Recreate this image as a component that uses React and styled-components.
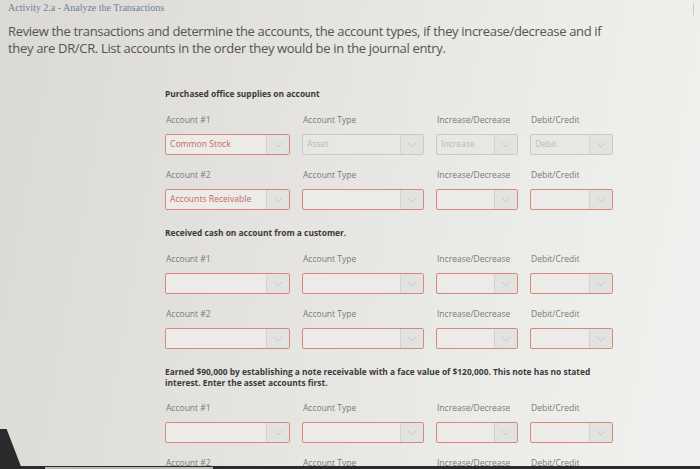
import React from "react";
import styled, { createGlobalStyle } from "styled-components";

const Global = createGlobalStyle`
  html, body { margin: 0; padding: 0; }
  body { font-family: "Open Sans", "Liberation Sans", sans-serif; }
`;

const Screen = styled.div`
  position: relative;
  width: 700px;
  height: 469px;
  overflow: hidden;
  background: linear-gradient(100deg, #dad9d4 0%, #e3e2de 35%, #ebebe8 70%, #f1f1ef 100%);
`;

const Header = styled.header`
  padding: 1px 8px 0 8px;
`;

const Crumb = styled.div`
  font-family: "Liberation Serif", "DejaVu Serif", serif;
  font-size: 10px;
  line-height: 13px;
  color: #70819a;
`;

const Instructions = styled.p`
  margin: 9px 0 0 0;
  font-size: 13px;
  letter-spacing: -0.33px;
  line-height: 17px;
  color: #545454;
  width: 615px;
`;

const Content = styled.main`
  padding: 31px 0 0 165px;
  display: flex;
  flex-direction: column;
  gap: 17px;
`;

const Section = styled.section`
  display: flex;
  flex-direction: column;
`;

const SectionTitle = styled.div`
  font-size: 8.4px;
  line-height: ${(p) => (p.$wide ? "11px" : "12px")};
  font-weight: 700;
  color: #3a3a3a;
  margin-bottom: 14px;
  width: ${(p) => (p.$wide ? "440px" : "auto")};
`;

const Entry = styled.div`
  display: grid;
  grid-template-columns: 125px 122px 82px 83px;
  column-gap: 12px;
  grid-template-rows: 11px 21px;
  row-gap: 9px;
  & + & { margin-top: 14px; }
`;

const Label = styled.div`
  font-size: 8.5px;
  line-height: 11px;
  color: #7a7a7a;
  padding-left: 1px;
  white-space: nowrap;
`;

const Select = styled.div`
  display: flex;
  height: 21px;
  box-sizing: border-box;
  border: 1px solid ${(p) => (p.$disabled ? "#c9c9c7" : "#d9877a")};
  border-radius: 2px;
  background: ${(p) => (p.$disabled ? "#e7e7e5" : "#ecebe8")};
  overflow: hidden;
`;

const Value = styled.div`
  flex: 1;
  font-size: 8.6px;
  line-height: 19px;
  padding-left: 4px;
  color: ${(p) => (p.$disabled ? "#b9b9b9" : "#c46a5c")};
  white-space: nowrap;
  overflow: hidden;
`;

const Arrow = styled.div`
  width: 22px;
  flex: none;
  border-left: 1px solid #d3d3d0;
  background: #e2e2df;
  display: flex;
  align-items: center;
  justify-content: center;
`;

const Bezel = styled.div`
  position: absolute;
  left: 0;
  right: 0;
  bottom: 0;
  height: 3px;
  background: #2b2b2d;
`;

const BezelGap = styled.div`
  position: absolute;
  left: 45px;
  bottom: 0;
  width: 168px;
  height: 2px;
  background: #b9b8b4;
`;

const Corner = styled.div`
  position: absolute;
  left: 0;
  bottom: 0;
  width: 22px;
  height: 40px;
  background: #2b2b2d;
  clip-path: polygon(0 0, 30% 0, 100% 100%, 0 100%);
`;

const Edge = styled.div`
  position: absolute;
  right: 4px;
  top: 3px;
  width: 2px;
  height: 12px;
  border-left: 1px solid #c9c9c6;
`;

const Chevron = () => (
  <svg width="10" height="6" viewBox="0 0 10 6">
    <path d="M0.5 0.5 L5 5 L9.5 0.5" fill="none" stroke="#c6c6c3" strokeWidth="0.9" />
  </svg>
);

const Dropdown = ({ value = "", disabled }) => (
  <Select $disabled={disabled}>
    <Value $disabled={disabled}>{value}</Value>
    <Arrow>
      <Chevron />
    </Arrow>
  </Select>
);

const JournalEntry = ({ n, values = [], disabledFrom = 99 }) => (
  <Entry>
    <Label>Account #{n}</Label>
    <Label>Account Type</Label>
    <Label>Increase/Decrease</Label>
    <Label>Debit/Credit</Label>
    {[0, 1, 2, 3].map((i) => (
      <Dropdown key={i} value={values[i]} disabled={i >= disabledFrom} />
    ))}
  </Entry>
);

export default function App() {
  return (
    <Screen>
      <Global />
      <Header>
        <Crumb>Activity 2.a - Analyze the Transactions</Crumb>
        <Instructions>
          Review the transactions and determine the accounts, the account types, if they increase/decrease and if
          they are DR/CR. List accounts in the order they would be in the journal entry.
        </Instructions>
      </Header>
      <Content>
        <Section>
          <SectionTitle>Purchased office supplies on account</SectionTitle>
          <JournalEntry n={1} values={["Common Stock", "Asset", "Increase", "Debit"]} disabledFrom={1} />
          <JournalEntry n={2} values={["Accounts Receivable"]} />
        </Section>
        <Section>
          <SectionTitle>Received cash on account from a customer.</SectionTitle>
          <JournalEntry n={1} />
          <JournalEntry n={2} />
        </Section>
        <Section>
          <SectionTitle $wide>
            Earned $90,000 by establishing a note receivable with a face value of $120,000. This note has no stated
            interest. Enter the asset accounts first.
          </SectionTitle>
          <JournalEntry n={1} />
          <JournalEntry n={2} />
        </Section>
      </Content>
      <Edge />
      <Corner />
      <Bezel />
      <BezelGap />
    </Screen>
  );
}
